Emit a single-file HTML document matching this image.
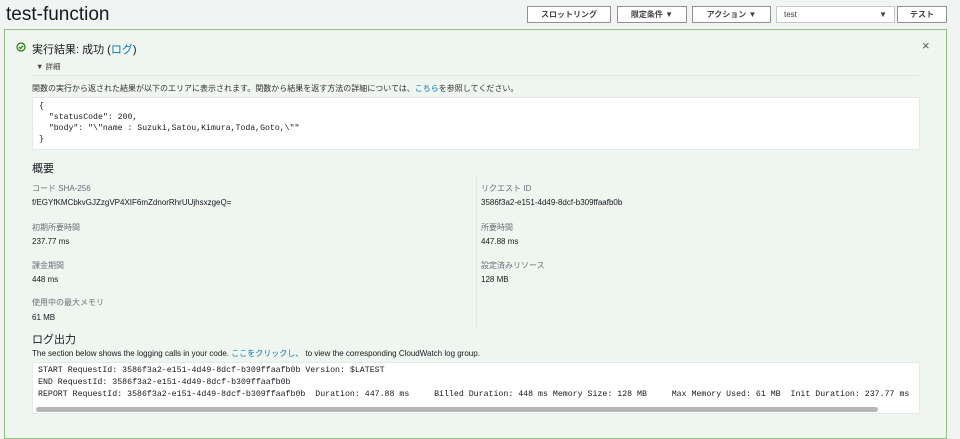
<!DOCTYPE html>
<html><head><meta charset="utf-8"><style>
*{margin:0;padding:0;box-sizing:border-box}
body{width:960px;height:428px;overflow:hidden;background:#f2f3f3;font-family:"Liberation Sans","Noto Sans CJK JP",sans-serif;color:#16191f;position:relative}
.a{position:absolute;white-space:nowrap}
.btn{position:absolute;top:6px;height:17px;border:1px solid #8d9196;background:#fff;font-size:8px;font-weight:bold;color:#444;text-align:center;line-height:15px}
.panel{position:absolute;left:4px;top:29px;width:943px;height:410px;background:#eff5ef;border:1px solid #94bf8a}
.s{font-size:8px}
.l{font-size:8px;color:#687078}
.mono{font-family:"Liberation Mono",monospace;font-size:8.2px;line-height:11px;white-space:pre}
.box{position:absolute;background:#fff;border:1px solid #e6e9ea;overflow:hidden}
.lk{color:#0073bb}
</style></head><body>
<div class="a" style="left:6px;top:4px;font-size:19px;">test-function</div>
<div class="btn" style="left:527px;width:84px">スロットリング</div>
<div class="btn" style="left:617px;width:70px">限定条件 ▼</div>
<div class="btn" style="left:692px;width:79px">アクション ▼</div>
<div class="btn" style="left:776px;width:119px;text-align:left;padding-left:7px;font-weight:normal;border-color:#c6c9cc">test<span style="position:absolute;right:7px">▼</span></div>
<div class="btn" style="left:897px;width:50px">テスト</div>
<div class="panel"></div>
<svg class="a" style="left:16px;top:42px" width="10" height="10" viewBox="0 0 10 10"><circle cx="5" cy="5" r="4" fill="none" stroke="#1d8102" stroke-width="1.2"/><path d="M3 5.2l1.4 1.3L7 3.8" fill="none" stroke="#1d8102" stroke-width="1.2"/></svg>
<div class="a" style="left:32px;top:41px;font-size:11px">実行結果: 成功 (<span class="lk">ログ</span>)</div>
<div class="a" style="left:922px;top:38px;font-size:13px;color:#555">×</div>
<div class="a" style="left:36px;top:61px;font-size:7.5px;color:#444">▼ 詳細</div>
<div class="a" style="left:32px;top:75px;width:887px;border-top:1px solid #dfe4df"></div>
<div class="a s" style="left:32px;top:83px;color:#333">関数の実行から返された結果が以下のエリアに表示されます。関数から結果を返す方法の詳細については、<span class="lk">こちら</span>を参照してください。</div>
<div class="box" style="left:32px;top:97px;width:888px;height:53px"><div class="mono" style="position:absolute;left:6px;top:3px">{
  "statusCode": 200,
  "body": "\"name : Suzuki,Satou,Kimura,Toda,Goto,\""
}</div></div>
<div class="a" style="left:32px;top:160px;font-size:11px">概要</div>
<div class="a" style="left:476px;top:175px;height:153px;border-left:1px solid #e2e8e2"></div>
<div class="a l" style="left:32px;top:183px">コード SHA-256</div>
<div class="a s" style="left:32px;top:198px">f/EGYfKMCbkvGJZzgVP4XIF6mZdnorRhrUUjhsxzgeQ=</div>
<div class="a l" style="left:32px;top:222px">初期所要時間</div>
<div class="a s" style="left:32px;top:237px">237.77 ms</div>
<div class="a l" style="left:32px;top:260px">課金期間</div>
<div class="a s" style="left:32px;top:275px">448 ms</div>
<div class="a l" style="left:32px;top:297px">使用中の最大メモリ</div>
<div class="a s" style="left:32px;top:313px">61 MB</div>
<div class="a l" style="left:481px;top:183px">リクエスト ID</div>
<div class="a s" style="left:481px;top:198px">3586f3a2-e151-4d49-8dcf-b309ffaafb0b</div>
<div class="a l" style="left:481px;top:222px">所要時間</div>
<div class="a s" style="left:481px;top:237px">447.88 ms</div>
<div class="a l" style="left:481px;top:260px">設定済みリソース</div>
<div class="a s" style="left:481px;top:275px">128 MB</div>
<div class="a" style="left:32px;top:331px;font-size:11px">ログ出力</div>
<div class="a s" style="left:32px;top:348px">The section below shows the logging calls in your code. <span class="lk">ここをクリックし、</span> to view the corresponding CloudWatch log group.</div>
<div class="box" style="left:32px;top:362px;width:888px;height:52px"><div class="mono" style="position:absolute;left:5px;top:2px;font-size:8.25px;line-height:12px">START RequestId: 3586f3a2-e151-4d49-8dcf-b309ffaafb0b Version: $LATEST
END RequestId: 3586f3a2-e151-4d49-8dcf-b309ffaafb0b
REPORT RequestId: 3586f3a2-e151-4d49-8dcf-b309ffaafb0b  Duration: 447.88 ms     Billed Duration: 448 ms Memory Size: 128 MB     Max Memory Used: 61 MB  Init Duration: 237.77 ms</div>
<div style="position:absolute;left:3px;top:44px;width:842px;height:5px;background:#b5b5b5;border-radius:3px"></div></div>
</body></html>
